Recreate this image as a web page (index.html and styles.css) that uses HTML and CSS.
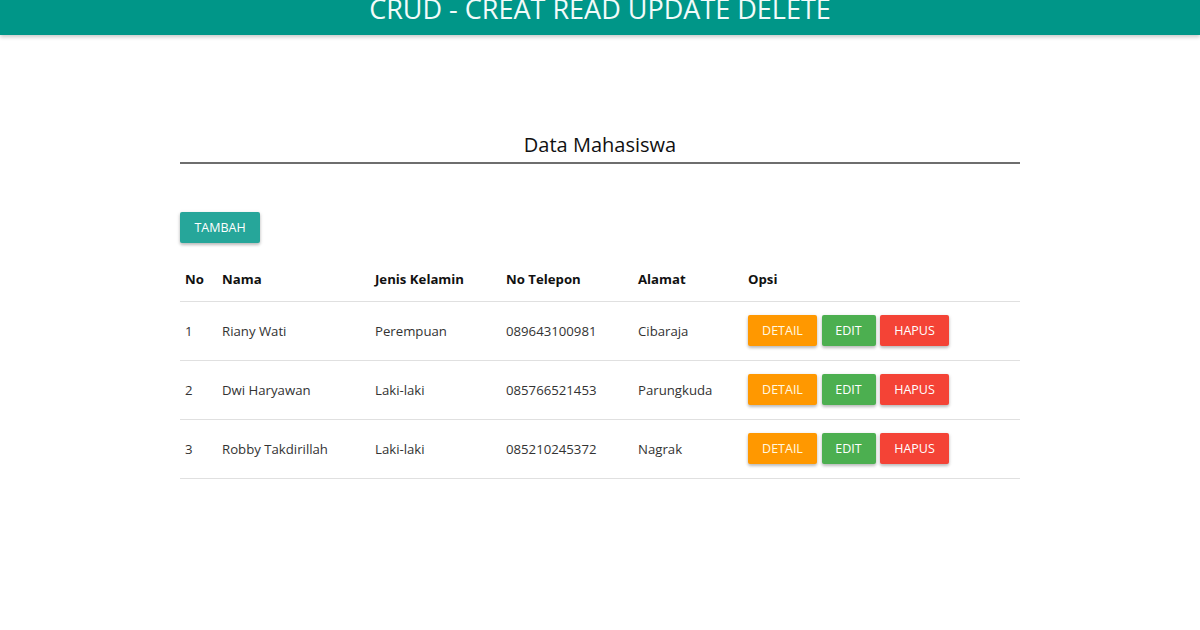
FILE: index.html
```html
<!DOCTYPE html>
<html>
<head>
<meta charset="utf-8">
<link rel="stylesheet" href="styles.css">
</head>
<body>
<nav class="topbar">
  <div class="brand">CRUD - CREAT READ UPDATE DELETE</div>
</nav>
<main class="container">
  <h2 class="title">Data Mahasiswa</h2>
  <div class="actions"><a class="btn btn-teal">TAMBAH</a></div>
  <table class="data">
    <colgroup>
      <col class="c1"><col class="c2"><col class="c3"><col class="c4"><col class="c5"><col class="c6">
    </colgroup>
    <thead>
      <tr><th>No</th><th>Nama</th><th>Jenis Kelamin</th><th>No Telepon</th><th>Alamat</th><th>Opsi</th></tr>
    </thead>
    <tbody>
      <tr><td>1</td><td>Riany Wati</td><td>Perempuan</td><td>089643100981</td><td>Cibaraja</td>
        <td class="ops-cell"><div class="ops"><a class="btn btn-orange">DETAIL</a><a class="btn btn-green">EDIT</a><a class="btn btn-red">HAPUS</a></div></td></tr>
      <tr><td>2</td><td>Dwi Haryawan</td><td>Laki-laki</td><td>085766521453</td><td>Parungkuda</td>
        <td class="ops-cell"><div class="ops"><a class="btn btn-orange">DETAIL</a><a class="btn btn-green">EDIT</a><a class="btn btn-red">HAPUS</a></div></td></tr>
      <tr><td>3</td><td>Robby Takdirillah</td><td>Laki-laki</td><td>085210245372</td><td>Nagrak</td>
        <td class="ops-cell"><div class="ops"><a class="btn btn-orange">DETAIL</a><a class="btn btn-green">EDIT</a><a class="btn btn-red">HAPUS</a></div></td></tr>
    </tbody>
  </table>
</main>
</body>
</html>
```

FILE: styles.css
```css
* { box-sizing: border-box; }
html, body { margin: 0; padding: 0; background: #fff; }
body {
  font-family: "Open Sans", "Noto Sans", Arial, sans-serif;
  color: #222;
  font-size: 13.2px;
}
.topbar {
  height: 35px;
  background: #009688;
  box-shadow: 0 2px 4px rgba(0,0,0,0.22);
  overflow: hidden;
  display: flex;
  justify-content: center;
  align-items: flex-end;
}
.brand {
  color: #f2fbfa;
  font-size: 27px;
  line-height: 27px;
  padding-bottom: 13px;
  white-space: nowrap;
}
.container {
  width: 840px;
  margin: 0 auto;
  padding-top: 96px;
}
.title {
  margin: 0;
  text-align: center;
  font-weight: 400;
  font-size: 20px;
  line-height: 28px;
  color: #111;
  padding-bottom: 3px;
  border-bottom: 2px solid #6e6e6e;
}
.actions {
  padding-top: 48px;
  padding-bottom: 15px;
  display: flex;
}
.btn {
  display: inline-flex;
  align-items: center;
  justify-content: center;
  height: 31px;
  color: #fff;
  font-size: 12.5px;
  border-radius: 2px;
  box-shadow: 0 2px 3px rgba(0,0,0,0.2), 0 1px 4px rgba(0,0,0,0.12);
  cursor: pointer;
  white-space: nowrap;
}
.btn-teal { background: #26a69a; width: 80px; }
.btn-orange { background: #ff9800; width: 69px; color: #fff8e0; }
.btn-green { background: #4caf50; width: 54px; }
.btn-red { background: #f44336; width: 69px; }
.data {
  width: 100%;
  border-collapse: collapse;
  table-layout: fixed;
}
.c1 { width: 37px; }
.c2 { width: 153px; }
.c3 { width: 131px; }
.c4 { width: 132px; }
.c5 { width: 110px; }
.data th {
  text-align: left;
  font-weight: 700;
  color: #111;
  padding: 11px 5px 12px;
  line-height: 20px;
  border-bottom: 1px solid #e0e0e0;
}
.data td {
  padding: 13px 5px 14px;
  line-height: 20px;
  height: 59px;
  color: #333;
  border-bottom: 1px solid #e0e0e0;
  vertical-align: middle;
}
.ops { display: flex; gap: 4.5px; }
```
